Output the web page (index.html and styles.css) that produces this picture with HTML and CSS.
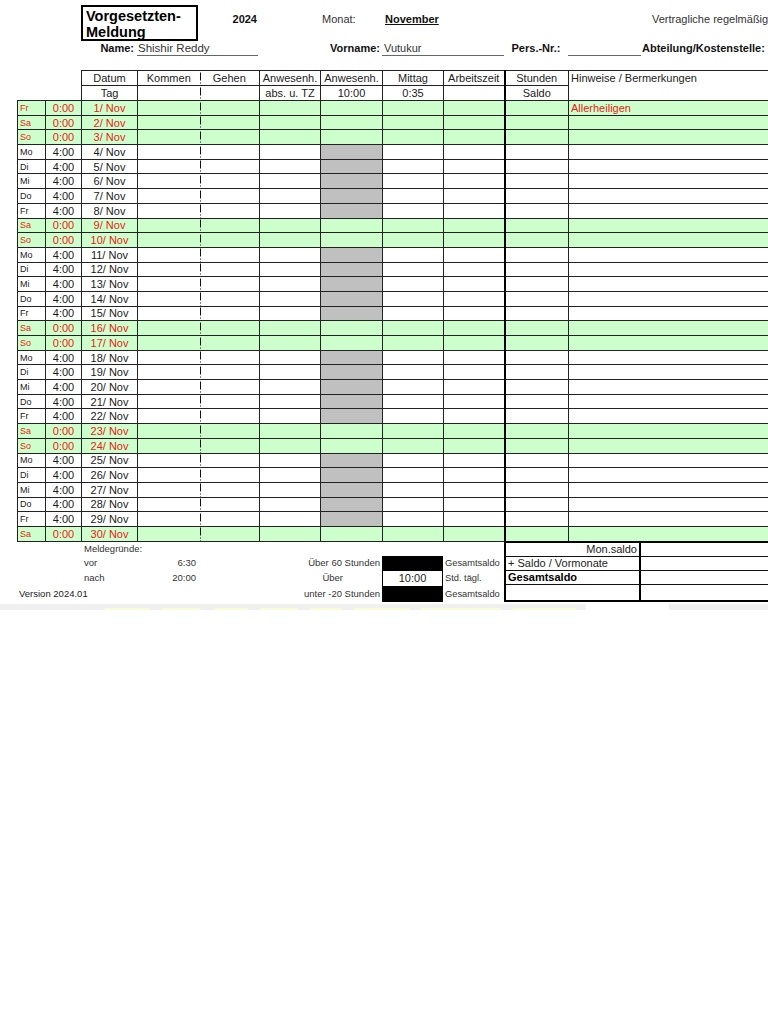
FILE: index.html
```html
<!DOCTYPE html>
<html lang="de">
<head>
<meta charset="utf-8">
<title>Vorgesetzten-Meldung November 2024</title>
<link rel="stylesheet" href="styles.css">
</head>
<body>
<div class="page">
<div class="sheet">
  <div class="grid top">
    <div class="title">Vorgesetzten-<br>Meldung</div>
    <div class="year">2024</div>
    <div class="monat">Monat:</div>
    <div class="month">November</div>
    <div class="vertrag">Vertragliche regelmäßige Arbeitszeit</div>

    <div class="lbl name-lbl">Name:</div>
    <div class="fill name-val">Shishir Reddy</div>
    <div class="lbl vor-lbl">Vorname:</div>
    <div class="fill vor-val">Vutukur</div>
    <div class="lbl pers-lbl">Pers.-Nr.:</div>
    <div class="fill pers-val"></div>
    <div class="lbl abt-lbl">Abteilung/Kostenstelle:</div>
  </div>

  <table class="tbl">
    <colgroup>
      <col class="c-wd"><col class="c-hr"><col class="c-dt"><col class="c-ko"><col class="c-gh">
      <col class="c-a1"><col class="c-a2"><col class="c-mi"><col class="c-az"><col class="c-st"><col class="c-hw">
    </colgroup>
    <thead>
      <tr class="h">
        <td class="nb"></td><td class="nb"></td>
        <td>Datum</td><td class="ko">Kommen</td><td class="gh">Gehen</td>
        <td>Anwesenh.</td><td>Anwesenh.</td><td>Mittag</td><td>Arbeitszeit</td><td class="st">Stunden</td>
        <td class="hw hw-h" rowspan="2">Hinweise / Bermerkungen</td>
      </tr>
      <tr class="h">
        <td class="nb"></td><td class="nb"></td>
        <td>Tag</td><td class="ko"></td><td class="gh"></td>
        <td>abs. u. TZ</td><td>10:00</td><td>0:35</td><td></td><td class="st">Saldo</td>
      </tr>
    </thead>
    <tbody>
      <tr class="we"><td class="wd">Fr</td><td>0:00</td><td>1/ Nov</td><td class="ko"></td><td class="gh"></td><td></td><td class="a2"></td><td></td><td></td><td class="st"></td><td class="hw">Allerheiligen</td></tr>
      <tr class="we"><td class="wd">Sa</td><td>0:00</td><td>2/ Nov</td><td class="ko"></td><td class="gh"></td><td></td><td class="a2"></td><td></td><td></td><td class="st"></td><td class="hw"></td></tr>
      <tr class="we"><td class="wd">So</td><td>0:00</td><td>3/ Nov</td><td class="ko"></td><td class="gh"></td><td></td><td class="a2"></td><td></td><td></td><td class="st"></td><td class="hw"></td></tr>
      <tr class="wk"><td class="wd">Mo</td><td>4:00</td><td>4/ Nov</td><td class="ko"></td><td class="gh"></td><td></td><td class="a2"></td><td></td><td></td><td class="st"></td><td class="hw"></td></tr>
      <tr class="wk"><td class="wd">Di</td><td>4:00</td><td>5/ Nov</td><td class="ko"></td><td class="gh"></td><td></td><td class="a2"></td><td></td><td></td><td class="st"></td><td class="hw"></td></tr>
      <tr class="wk"><td class="wd">Mi</td><td>4:00</td><td>6/ Nov</td><td class="ko"></td><td class="gh"></td><td></td><td class="a2"></td><td></td><td></td><td class="st"></td><td class="hw"></td></tr>
      <tr class="wk"><td class="wd">Do</td><td>4:00</td><td>7/ Nov</td><td class="ko"></td><td class="gh"></td><td></td><td class="a2"></td><td></td><td></td><td class="st"></td><td class="hw"></td></tr>
      <tr class="wk"><td class="wd">Fr</td><td>4:00</td><td>8/ Nov</td><td class="ko"></td><td class="gh"></td><td></td><td class="a2"></td><td></td><td></td><td class="st"></td><td class="hw"></td></tr>
      <tr class="we"><td class="wd">Sa</td><td>0:00</td><td>9/ Nov</td><td class="ko"></td><td class="gh"></td><td></td><td class="a2"></td><td></td><td></td><td class="st"></td><td class="hw"></td></tr>
      <tr class="we"><td class="wd">So</td><td>0:00</td><td>10/ Nov</td><td class="ko"></td><td class="gh"></td><td></td><td class="a2"></td><td></td><td></td><td class="st"></td><td class="hw"></td></tr>
      <tr class="wk"><td class="wd">Mo</td><td>4:00</td><td>11/ Nov</td><td class="ko"></td><td class="gh"></td><td></td><td class="a2"></td><td></td><td></td><td class="st"></td><td class="hw"></td></tr>
      <tr class="wk"><td class="wd">Di</td><td>4:00</td><td>12/ Nov</td><td class="ko"></td><td class="gh"></td><td></td><td class="a2"></td><td></td><td></td><td class="st"></td><td class="hw"></td></tr>
      <tr class="wk"><td class="wd">Mi</td><td>4:00</td><td>13/ Nov</td><td class="ko"></td><td class="gh"></td><td></td><td class="a2"></td><td></td><td></td><td class="st"></td><td class="hw"></td></tr>
      <tr class="wk"><td class="wd">Do</td><td>4:00</td><td>14/ Nov</td><td class="ko"></td><td class="gh"></td><td></td><td class="a2"></td><td></td><td></td><td class="st"></td><td class="hw"></td></tr>
      <tr class="wk"><td class="wd">Fr</td><td>4:00</td><td>15/ Nov</td><td class="ko"></td><td class="gh"></td><td></td><td class="a2"></td><td></td><td></td><td class="st"></td><td class="hw"></td></tr>
      <tr class="we"><td class="wd">Sa</td><td>0:00</td><td>16/ Nov</td><td class="ko"></td><td class="gh"></td><td></td><td class="a2"></td><td></td><td></td><td class="st"></td><td class="hw"></td></tr>
      <tr class="we"><td class="wd">So</td><td>0:00</td><td>17/ Nov</td><td class="ko"></td><td class="gh"></td><td></td><td class="a2"></td><td></td><td></td><td class="st"></td><td class="hw"></td></tr>
      <tr class="wk"><td class="wd">Mo</td><td>4:00</td><td>18/ Nov</td><td class="ko"></td><td class="gh"></td><td></td><td class="a2"></td><td></td><td></td><td class="st"></td><td class="hw"></td></tr>
      <tr class="wk"><td class="wd">Di</td><td>4:00</td><td>19/ Nov</td><td class="ko"></td><td class="gh"></td><td></td><td class="a2"></td><td></td><td></td><td class="st"></td><td class="hw"></td></tr>
      <tr class="wk"><td class="wd">Mi</td><td>4:00</td><td>20/ Nov</td><td class="ko"></td><td class="gh"></td><td></td><td class="a2"></td><td></td><td></td><td class="st"></td><td class="hw"></td></tr>
      <tr class="wk"><td class="wd">Do</td><td>4:00</td><td>21/ Nov</td><td class="ko"></td><td class="gh"></td><td></td><td class="a2"></td><td></td><td></td><td class="st"></td><td class="hw"></td></tr>
      <tr class="wk"><td class="wd">Fr</td><td>4:00</td><td>22/ Nov</td><td class="ko"></td><td class="gh"></td><td></td><td class="a2"></td><td></td><td></td><td class="st"></td><td class="hw"></td></tr>
      <tr class="we"><td class="wd">Sa</td><td>0:00</td><td>23/ Nov</td><td class="ko"></td><td class="gh"></td><td></td><td class="a2"></td><td></td><td></td><td class="st"></td><td class="hw"></td></tr>
      <tr class="we"><td class="wd">So</td><td>0:00</td><td>24/ Nov</td><td class="ko"></td><td class="gh"></td><td></td><td class="a2"></td><td></td><td></td><td class="st"></td><td class="hw"></td></tr>
      <tr class="wk"><td class="wd">Mo</td><td>4:00</td><td>25/ Nov</td><td class="ko"></td><td class="gh"></td><td></td><td class="a2"></td><td></td><td></td><td class="st"></td><td class="hw"></td></tr>
      <tr class="wk"><td class="wd">Di</td><td>4:00</td><td>26/ Nov</td><td class="ko"></td><td class="gh"></td><td></td><td class="a2"></td><td></td><td></td><td class="st"></td><td class="hw"></td></tr>
      <tr class="wk"><td class="wd">Mi</td><td>4:00</td><td>27/ Nov</td><td class="ko"></td><td class="gh"></td><td></td><td class="a2"></td><td></td><td></td><td class="st"></td><td class="hw"></td></tr>
      <tr class="wk"><td class="wd">Do</td><td>4:00</td><td>28/ Nov</td><td class="ko"></td><td class="gh"></td><td></td><td class="a2"></td><td></td><td></td><td class="st"></td><td class="hw"></td></tr>
      <tr class="wk"><td class="wd">Fr</td><td>4:00</td><td>29/ Nov</td><td class="ko"></td><td class="gh"></td><td></td><td class="a2"></td><td></td><td></td><td class="st"></td><td class="hw"></td></tr>
      <tr class="we"><td class="wd">Sa</td><td>0:00</td><td>30/ Nov</td><td class="ko"></td><td class="gh"></td><td></td><td class="a2"></td><td></td><td></td><td class="st"></td><td class="hw"></td></tr>
    </tbody>
  </table>

  <div class="grid foot">
    <div class="ft f-mg">Meldegründe:</div>
    <div class="ft f-vor">vor</div>
    <div class="ft f-vorv">6:30</div>
    <div class="ft f-nach">nach</div>
    <div class="ft f-nachv">20:00</div>
    <div class="ft f-ver">Version 2024.01</div>

    <div class="ft f-u60">Über 60 Stunden</div>
    <div class="blk f-b1"></div>
    <div class="ft f-g1">Gesamtsaldo</div>
    <div class="ft f-ueb">Über</div>
    <div class="f-std">10:00</div>
    <div class="ft f-stdl">Std. tägl.</div>
    <div class="ft f-u20">unter -20 Stunden</div>
    <div class="blk f-b2"></div>
    <div class="ft f-g2">Gesamtsaldo</div>

    <div class="saldo">
      <div class="sc sl right">Mon.saldo</div><div class="sc sr"></div>
      <div class="sc sl">+ Saldo / Vormonate</div><div class="sc sr"></div>
      <div class="sc sl bold">Gesamtsaldo</div><div class="sc sr"></div>
      <div class="sc sl last"></div><div class="sc sr last"></div>
    </div>
  </div>
</div>
<div class="strip">
  <span class="seg s1"></span><span class="seg s2"></span><span class="seg s3"></span><span class="seg s4"></span>
  <span class="seg s5"></span><span class="seg s6"></span><span class="seg s7"></span><span class="seg s8"></span>
</div>
</div>
</body>
</html>
```

FILE: styles.css
```css
* { box-sizing: border-box; }

body {
  margin: 0;
  background: #fff;
  font-family: "Liberation Sans", Arial, sans-serif;
  color: #111;
}

.page {
  width: 768px;
  height: 1024px;
  overflow: hidden;
  background: #fff;
}

.sheet {
  padding-left: 17px;
  width: 820px;
}

.grid {
  display: grid;
  grid-template-columns: 28px 36px 56px 62px 60px 61px 62px 61px 61px 64px 73px 230px;
}

/* ---------- top block ---------- */
.top {
  padding-top: 5px;
  grid-template-rows: 36px 15px;
}

.title {
  grid-column: 3 / 5;
  grid-row: 1;
  border: 2px solid #000;
  font-size: 14.5px;
  font-weight: bold;
  line-height: 16px;
  padding: 1px 0 0 3px;
  margin-right: 1px;
  color: #000;
}

.year, .monat, .month, .vertrag {
  grid-row: 1;
  align-self: start;
  padding-top: 8px;
  font-size: 11px;
  line-height: 13px;
  white-space: nowrap;
}

.year { grid-column: 5; text-align: right; padding-right: 2px; font-weight: bold; }
.monat { grid-column: 7; padding-left: 2px; color: #333; }
.month { grid-column: 8; padding-left: 3px; font-weight: bold; text-decoration: underline; }
.vertrag { grid-column: 12; padding-left: 11px; color: #333; }

.lbl, .fill {
  grid-row: 2;
  font-size: 11px;
  line-height: 13px;
  align-self: end;
  white-space: nowrap;
}

.lbl { font-weight: bold; padding-bottom: 1px; }
.fill {
  border-bottom: 1px solid #666;
  height: 15px;
  padding-top: 1px;
  color: #333;
}

.name-lbl { grid-column: 1 / 4; text-align: right; padding-right: 3px; }
.name-val { grid-column: 4 / 6; padding-left: 1px; font-size: 11.5px; margin-right: 1px; }
.vor-lbl { grid-column: 6 / 8; text-align: right; padding-right: 2px; }
.vor-val { grid-column: 8 / 10; padding-left: 2px; }
.pers-lbl { grid-column: 10; text-align: center; }
.pers-val { grid-column: 11; }
.abt-lbl { grid-column: 12; padding-left: 1px; }

/* ---------- main table ---------- */
.tbl {
  margin-top: 14px;
  border-collapse: collapse;
  table-layout: fixed;
  width: 781px;
  font-size: 11px;
}

.c-wd { width: 28px; }
.c-hr { width: 36px; }
.c-dt { width: 56px; }
.c-ko { width: 62px; }
.c-gh { width: 60px; }
.c-a1 { width: 61px; }
.c-a2 { width: 62px; }
.c-mi { width: 61px; }
.c-az { width: 61px; }
.c-st { width: 64px; }
.c-hw { width: 230px; }

.tbl td {
  border: 1px solid #222;
  padding: 0;
  height: 14.7px;
  line-height: 12px;
  text-align: center;
  vertical-align: middle;
  white-space: nowrap;
  overflow: hidden;
  color: #1a1a1a;
}

.tbl tr.h td { height: 15px; color: #222; }
.tbl td.nb { border: none; }

.tbl td.ko { border-right: none; }
.tbl td.gh {
  border-left: none;
  background-image: linear-gradient(to bottom, #111 0 8px, transparent 8px 10px, #111 10px 11px, transparent 11px);
  background-size: 1px 13px;
  background-repeat: repeat-y;
  background-position: 0 1px;
}

.tbl td.st { border-left: 2px solid #000; }

.tbl td.hw { text-align: left; padding-left: 2px; border-right: none; }
.tbl td.hw-h { vertical-align: top; padding-top: 1px; }

.tbl td.wd {
  text-align: left;
  padding-left: 2px;
  font-size: 9px;
}

.tbl tr.we td { background-color: #ccffcc; color: #f01818; }
.tbl tr.we + tr.we td { border-top-color: #6a6a6a; }
.tbl tr.wk td.a2 { background-color: #c0c0c0; }

/* ---------- footer ---------- */
.foot {
  grid-template-rows: 14px 15px 15px 16px;
}

.ft {
  font-size: 9.5px;
  line-height: 12px;
  color: #333;
  white-space: nowrap;
  align-self: center;
}

.f-mg { grid-column: 3 / 5; grid-row: 1; padding-left: 3px; }
.f-vor { grid-column: 3; grid-row: 2; padding-left: 3px; }
.f-vorv { grid-column: 4; grid-row: 2; text-align: right; padding-right: 3px; }
.f-nach { grid-column: 3; grid-row: 3; padding-left: 3px; }
.f-nachv { grid-column: 4; grid-row: 3; text-align: right; padding-right: 3px; }
.f-ver { grid-column: 1 / 4; grid-row: 4; padding-left: 2px; color: #222; }

.f-u60 { grid-column: 5 / 8; grid-row: 2; text-align: right; padding-right: 2px; }
.f-ueb { grid-column: 6 / 8; grid-row: 3; text-align: right; padding-right: 39px; }
.f-u20 { grid-column: 5 / 8; grid-row: 4; text-align: right; padding-right: 2px; }

.blk { grid-column: 8; background: #000; }
.f-b1 { grid-row: 2; }
.f-b2 { grid-row: 4; }

.f-std {
  grid-column: 8;
  grid-row: 3;
  border-left: 1px solid #000;
  border-right: 1px solid #000;
  font-size: 11px;
  line-height: 15px;
  text-align: center;
  color: #222;
}

.f-g1, .f-stdl, .f-g2 {
  grid-column: 9;
  padding-left: 2px;
  font-size: 9.3px;
  overflow: hidden;
}
.f-g1 { grid-row: 2; }
.f-stdl { grid-row: 3; }
.f-g2 { grid-row: 4; }

.saldo {
  grid-column: 10 / 13;
  grid-row: 1 / 5;
  border-top: 2px solid #000;
  border-left: 2px solid #000;
  border-bottom: 2px solid #000;
  display: grid;
  grid-template-columns: 135px 1fr;
  grid-template-rows: 1fr 1fr 1fr 1fr;
  margin-top: -1px;
}

.sc {
  border-bottom: 1px solid #111;
  font-size: 11px;
  line-height: 13px;
  white-space: nowrap;
  color: #222;
  padding-left: 2px;
}

.sc.sl { border-right: 2px solid #000; }
.sc.last { border-bottom: none; }
.sc.right { text-align: right; padding-right: 2px; }
.sc.bold { font-weight: bold; color: #000; }

/* ---------- page edge strip ---------- */
.strip {
  margin-top: 2px;
  height: 6px;
  display: flex;
  align-items: flex-end;
  background: linear-gradient(to right, #f0f0f0 0 586px, #fff 586px 669px, #f0f0f0 669px);
}

.seg {
  height: 2px;
  background: #fbfbd8;
}

.s1 { margin-left: 105px; width: 45px; }
.s2 { margin-left: 12px; width: 39px; }
.s3 { margin-left: 13px; width: 34px; }
.s4 { margin-left: 13px; width: 37px; }
.s5 { margin-left: 12px; width: 32px; }
.s6 { margin-left: 12px; width: 56px; }
.s7 { margin-left: 11px; width: 80px; }
.s8 { margin-left: 12px; width: 63px; }
```
